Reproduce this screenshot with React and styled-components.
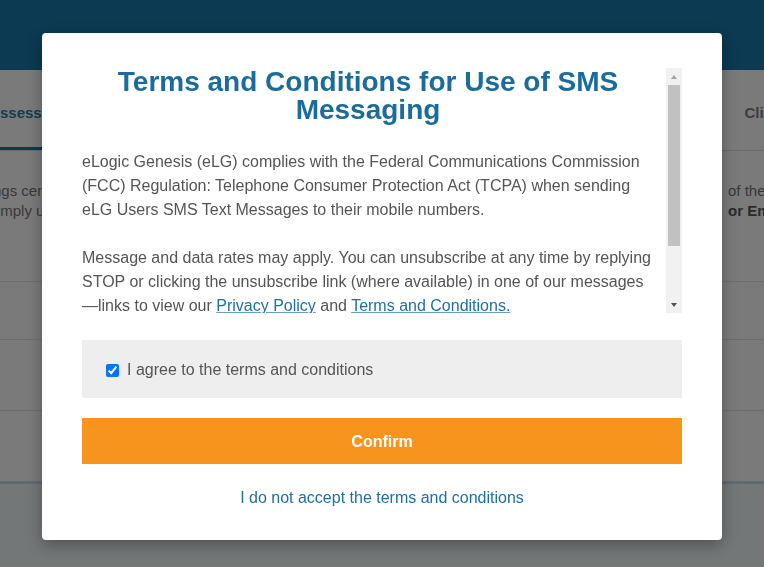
import React from 'react';
import styled, { createGlobalStyle } from 'styled-components';

// The page behind the dialog is drawn in its dimmed colours directly.
const GlobalStyle = createGlobalStyle`
  html, body {
    margin: 0;
    padding: 0;
    height: 100%;
    overflow: hidden;
    background: #7a7a7a;
    font-family: "Liberation Sans", Arial, sans-serif;
  }
`

const Page = styled.div`
  height: 567px;
  display: flex;
  flex-direction: column;
  background: #7a7a7a;
  overflow: hidden;
`

const Header = styled.div`
  height: 70px;
  flex-shrink: 0;
  background: #0b3a52;
`

const TabBar = styled.div`
  display: grid;
  grid-template-columns: repeat(5, 183px);
  margin-left: -54px;
  height: 80px;
  flex-shrink: 0;
  border-bottom: 1px solid #6b6b6b;
`

const Tab = styled.div`
  display: flex;
  align-items: center;
  justify-content: center;
  padding-top: 7px;
  font-size: 15px;
  font-weight: bold;
  color: ${props => props.active ? '#103d56' : '#3d3d3d'};
  border-bottom: 3px solid ${props => props.active ? '#0b3a52' : 'transparent'};
  white-space: nowrap;
  overflow: hidden;
`

const Intro = styled.div`
  display: flex;
  justify-content: space-between;
  height: 130px;
  flex-shrink: 0;
  padding-top: 30px;
  box-sizing: border-box;
  font-size: 15px;
  line-height: 20px;
  color: #383838;
  white-space: nowrap;
  overflow: hidden;
`

const IntroLeft = styled.div`
  margin-left: -37px;
  width: 200px;
  overflow: hidden;
`

const IntroRight = styled.div`
  width: 36px;
  overflow: hidden;

  b {
    color: #2a2a2a;
  }
`

const Row = styled.div`
  height: ${props => props.tall ? 71 : 58}px;
  flex-shrink: 0;
  border-top: 1px solid #6e6e6e;
  box-sizing: border-box;
`

const Footer = styled.div`
  flex: 1;
  background: #737778;
  border-top: 3px solid #5f6b72;
`

const Backdrop = styled.div`
  position: fixed;
  inset: 0;
`

const Modal = styled.div`
  width: 680px;
  margin: 33px auto 0;
  background: #fff;
  border-radius: 4px;
  box-shadow: 0 5px 15px rgba(0, 0, 0, 0.3);
  padding: 35px 40px 30px;
  box-sizing: border-box;
  display: flex;
  flex-direction: column;
`

const ScrollFrame = styled.div`
  display: flex;
  height: 245px;
`

const ScrollContent = styled.div`
  flex: 1;
  overflow: hidden;
  padding-right: 12px;
`

const Scrollbar = styled.div`
  width: 16px;
  display: flex;
  flex-direction: column;
  background: #f1f1f1;
`

const ArrowButton = styled.div`
  height: 17px;
  display: flex;
  align-items: center;
  justify-content: center;

  &::after {
    content: '';
    width: 0;
    height: 0;
    border-left: 3.5px solid transparent;
    border-right: 3.5px solid transparent;
    ${props => props.down
      ? 'border-top: 4px solid #505050;'
      : 'border-bottom: 4px solid #a3a3a3;'}
  }
`

const Thumb = styled.div`
  height: 161px;
  margin: 0 2px;
  background: #c1c1c1;
`

const Track = styled.div`
  flex: 1;
`

const Title = styled.h2`
  margin: 0 0 26px;
  font-size: 28px;
  line-height: 28px;
  font-weight: bold;
  text-align: center;
  color: #1a6c9d;
`

const Paragraph = styled.p`
  margin: 0 0 24px;
  font-size: 16px;
  line-height: 24px;
  color: #555;
`

const Link = styled.a`
  color: #1f6fa0;
  text-decoration: underline;
  text-decoration-color: #6a9fc0;
`

const AgreeBox = styled.label`
  margin-top: 27px;
  height: 58px;
  box-sizing: border-box;
  padding: 2px 24px 0;
  display: flex;
  align-items: center;
  gap: 8px;
  background: #eee;
  font-size: 16px;
  color: #555;
  cursor: pointer;

  input {
    width: 13px;
    height: 13px;
    margin: 0;
  }
`

const ConfirmButton = styled.button`
  margin-top: 20px;
  height: 46px;
  padding: 2px 0 0;
  border: none;
  background: #f7941d;
  color: #fff;
  font-family: inherit;
  font-size: 16px;
  font-weight: bold;
  cursor: pointer;
`

const DeclineLink = styled.a`
  margin-top: 22px;
  line-height: 24px;
  font-size: 16px;
  text-align: center;
  color: #1f6fa0;
  text-decoration: none;
  cursor: pointer;
`

const App = () => {
  return (
    <>
      <GlobalStyle />
      <Page>
        <Header />
        <TabBar>
          <Tab active>Assessments</Tab>
          <Tab>Reports</Tab>
          <Tab>Messages</Tab>
          <Tab>Settings</Tab>
          <Tab>Clients</Tab>
        </TabBar>
        <Intro>
          <IntroLeft>
            <div>Settings center for your account.</div>
            <div>We simply update how eLG contacts you.</div>
          </IntroLeft>
          <IntroRight>
            <div>of the</div>
            <b>or Email</b>
          </IntroRight>
        </Intro>
        <Row />
        <Row tall />
        <Row tall />
        <Footer />
      </Page>

      <Backdrop>
        <Modal>
          <ScrollFrame>
            <ScrollContent>
              <Title>Terms and Conditions for Use of SMS Messaging</Title>
              <Paragraph>
                eLogic Genesis (eLG) complies with the Federal Communications Commission (FCC)
                Regulation: Telephone Consumer Protection Act (TCPA) when sending eLG Users SMS
                Text Messages to their mobile numbers.
              </Paragraph>
              <Paragraph>
                Message and data rates may apply. You can unsubscribe at any time by replying STOP
                or clicking the unsubscribe link (where available) in one of our messages
                —links to view our <Link href="#">Privacy Policy</Link> and{' '}
                <Link href="#">Terms and Conditions.</Link>
              </Paragraph>
            </ScrollContent>
            <Scrollbar>
              <ArrowButton />
              <Thumb />
              <Track />
              <ArrowButton down />
            </Scrollbar>
          </ScrollFrame>
          <AgreeBox>
            <input type="checkbox" defaultChecked />
            I agree to the terms and conditions
          </AgreeBox>
          <ConfirmButton>Confirm</ConfirmButton>
          <DeclineLink>I do not accept the terms and conditions</DeclineLink>
        </Modal>
      </Backdrop>
    </>
  );
}

export default App;
